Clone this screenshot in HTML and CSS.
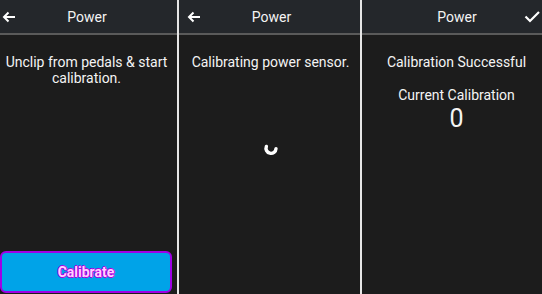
FILE: index.html
```html
<!DOCTYPE html>
<html>
<head>
<meta charset="utf-8">
<link rel="stylesheet" href="styles.css">
</head>
<body>
<div class="screens">
  <section class="panel p1">
    <header class="bar">
      <svg class="back" width="14" height="12" viewBox="0 0 14 12"><path d="M13 6H2M6.5 1.5L2 6l4.5 4.5" fill="none" stroke="#fff" stroke-width="2"/></svg>
      <span class="title">Power</span>
    </header>
    <div class="body">
      <p class="msg">Unclip from pedals &amp; start calibration.</p>
      <div class="spacer"></div>
      <button class="cal">Calibrate</button>
    </div>
  </section>
  <section class="panel p2">
    <header class="bar">
      <svg class="back" width="14" height="12" viewBox="0 0 14 12"><path d="M13 6H2M6.5 1.5L2 6l4.5 4.5" fill="none" stroke="#fff" stroke-width="2"/></svg>
      <span class="title">Power</span>
    </header>
    <div class="body">
      <p class="msg">Calibrating power sensor.</p>
      <div class="spin-wrap">
        <svg width="16" height="16" viewBox="0 0 16 16"><path d="M3.4 5.4A5 5 0 1 0 13 7.6" fill="none" stroke="#fff" stroke-width="3.4" stroke-linecap="round"/></svg>
      </div>
    </div>
  </section>
  <section class="panel p3">
    <header class="bar">
      <span class="title">Power</span>
      <svg class="check" width="16" height="13" viewBox="0 0 16 13"><path d="M1.5 6.5l4.5 4.5L15 2" fill="none" stroke="#fff" stroke-width="2.2"/></svg>
    </header>
    <div class="body">
      <p class="msg">Calibration Successful</p>
      <p class="label">Current Calibration</p>
      <p class="value">0</p>
    </div>
  </section>
</div>
</body>
</html>
```
FILE: styles.css
```css
html, body {
  margin: 0;
  padding: 0;
  background: #d8d8d8;
}
body {
  font-family: Roboto, "Liberation Sans", sans-serif;
  color: #f4f4f4;
}
.screens {
  display: flex;
  gap: 2px;
  width: 542px;
  height: 294px;
  background: #e6e6e6;
  overflow: hidden;
}
.panel {
  flex: 0 0 auto;
  display: flex;
  flex-direction: column;
  background: #1c1c1c;
  height: 294px;
}
.p1 { width: 177px; }
.p2 { width: 181px; }
.p3 { width: 180px; }
.bar {
  position: relative;
  height: 33px;
  background: #24272b;
  border-bottom: 2px solid #5a5a5a;
  display: flex;
  align-items: center;
  justify-content: center;
  flex: 0 0 auto;
}
.p1 .bar { padding-right: 3px; }
.p2 .bar { padding-left: 4px; }
.p3 .bar { padding-left: 10px; }
.title {
  font-size: 14px;
  color: #f4f4f4;
}
.back {
  position: absolute;
  left: 2px;
  top: 11px;
}
.p2 .back { left: 8px; }
.check {
  position: absolute;
  right: 2px;
  top: 10px;
}
.body {
  flex: 1;
  display: flex;
  flex-direction: column;
  align-items: center;
  text-align: center;
}
.p1 .body { padding-right: 4px; }
.p2 .body { padding-left: 2px; }
.p3 .body { padding-left: 9px; }
.msg {
  margin: 19px 0 0;
  font-size: 14px;
  line-height: 16px;
}
.spacer { flex: 1; }
.cal {
  width: 172px;
  height: 42px;
  margin: 0 0 1px 0;
  align-self: flex-start;
  background: #00a3e8;
  border: 2px solid #a000e6;
  border-radius: 6px;
  font-family: Roboto, "Liberation Sans", sans-serif;
  font-size: 14px;
  font-weight: 700;
  color: #ffd0ff;
  text-shadow: 1px 0 0 #b000e0, -1px 0 0 #b000e0, 0 1px 0 #b000e0, 0 -1px 0 #b000e0;
}
.spin-wrap {
  margin-top: 71px;
  margin-left: 1px;
  height: 16px;
}
.label {
  margin: 17px 0 0;
  font-size: 14px;
  line-height: 16px;
}
.value {
  margin: 2px 0 0;
  font-size: 25px;
  line-height: 28px;
}
```
